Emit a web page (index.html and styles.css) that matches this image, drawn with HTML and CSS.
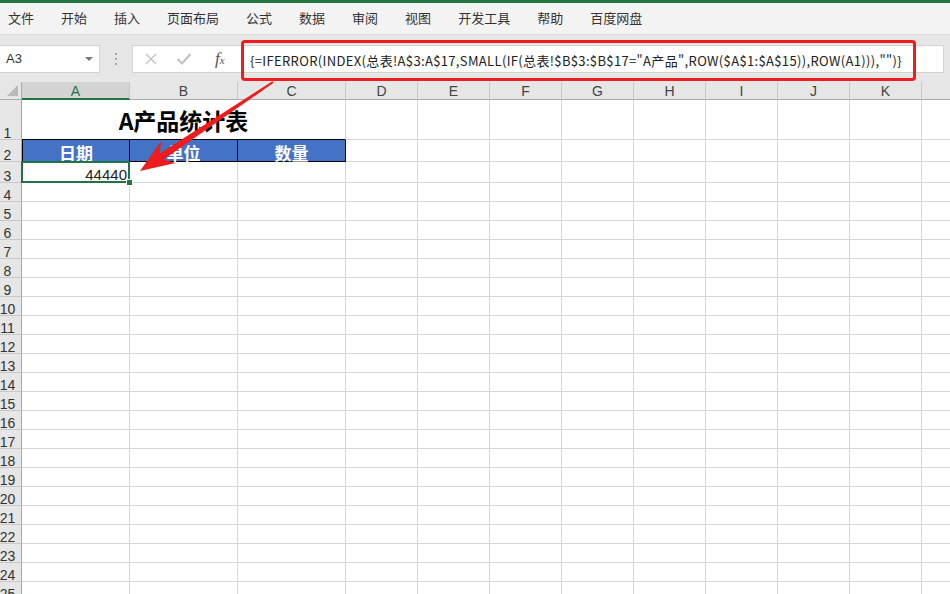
FILE: index.html
```html
<!DOCTYPE html>
<html lang="zh-CN">
<head>
  <meta charset="UTF-8">
  <title>A产品统计表 - Excel</title>
  <link rel="stylesheet" href="styles.css">
</head>
<body>
  <div class="topline"></div>
  <nav class="menu">
    <span>文件</span><span>开始</span><span>插入</span><span>页面布局</span><span>公式</span><span>数据</span><span>审阅</span><span>视图</span><span>开发工具</span><span>帮助</span><span>百度网盘</span>
  </nav>

  <div class="formula-row">
    <div class="namebox">
      <span>A3</span>
      <svg class="caret" width="8" height="5" viewBox="0 0 8 5"><polygon points="0,0 8,0 4,4" fill="#777"/></svg>
    </div>
    <div class="sep"><i></i><i></i><i></i></div>
    <div class="fbox">
      <div class="fbtns">
        <svg width="14" height="14" viewBox="0 0 14 14"><path d="M2 2 L12 12 M12 2 L2 12" stroke="#c2c2c2" stroke-width="1.4" fill="none"/></svg>
        <svg width="16" height="14" viewBox="0 0 16 14"><path d="M1.5 7 L6 11.5 L14.5 2" stroke="#c2c2c2" stroke-width="2" fill="none"/></svg>
        <span class="fx">f<sub>x</sub></span>
      </div>
      <div class="ftext">{=IFERROR(INDEX(总表!A$3:A$17,SMALL(IF(总表!$B$3:$B$17="A产品",ROW($A$1:$A$15)),ROW(A1))),"")}</div>
    </div>
  </div>

  <div class="sheet">
    <div class="corner"><svg width="22" height="18" viewBox="0 0 22 18"><polygon points="18,3 18,14 7,14" fill="#b9b9b9"/></svg></div>
    <div class="ch sel">A</div><div class="ch">B</div><div class="ch">C</div><div class="ch">D</div><div class="ch">E</div><div class="ch">F</div><div class="ch">G</div><div class="ch">H</div><div class="ch">I</div><div class="ch">J</div><div class="ch">K</div><div class="ch"></div>

    <div class="rh">1</div><div class="title">A产品统计表</div><div class="c"></div><div class="c"></div><div class="c"></div><div class="c"></div><div class="c"></div><div class="c"></div><div class="c"></div><div class="c"></div><div class="c"></div>

    <div class="rh">2</div><div class="hd first">日期</div><div class="hd">单位</div><div class="hd">数量</div><div class="c"></div><div class="c"></div><div class="c"></div><div class="c"></div><div class="c"></div><div class="c"></div><div class="c"></div><div class="c"></div><div class="c"></div>

    <div class="rh">3</div><div class="c num active">44440</div><div class="c"></div><div class="c"></div><div class="c"></div><div class="c"></div><div class="c"></div><div class="c"></div><div class="c"></div><div class="c"></div><div class="c"></div><div class="c"></div><div class="c"></div>

    <div class="rh">4</div><div class="c"></div><div class="c"></div><div class="c"></div><div class="c"></div><div class="c"></div><div class="c"></div><div class="c"></div><div class="c"></div><div class="c"></div><div class="c"></div><div class="c"></div><div class="c"></div>
    <div class="rh">5</div><div class="c"></div><div class="c"></div><div class="c"></div><div class="c"></div><div class="c"></div><div class="c"></div><div class="c"></div><div class="c"></div><div class="c"></div><div class="c"></div><div class="c"></div><div class="c"></div>
    <div class="rh">6</div><div class="c"></div><div class="c"></div><div class="c"></div><div class="c"></div><div class="c"></div><div class="c"></div><div class="c"></div><div class="c"></div><div class="c"></div><div class="c"></div><div class="c"></div><div class="c"></div>
    <div class="rh">7</div><div class="c"></div><div class="c"></div><div class="c"></div><div class="c"></div><div class="c"></div><div class="c"></div><div class="c"></div><div class="c"></div><div class="c"></div><div class="c"></div><div class="c"></div><div class="c"></div>
    <div class="rh">8</div><div class="c"></div><div class="c"></div><div class="c"></div><div class="c"></div><div class="c"></div><div class="c"></div><div class="c"></div><div class="c"></div><div class="c"></div><div class="c"></div><div class="c"></div><div class="c"></div>
    <div class="rh">9</div><div class="c"></div><div class="c"></div><div class="c"></div><div class="c"></div><div class="c"></div><div class="c"></div><div class="c"></div><div class="c"></div><div class="c"></div><div class="c"></div><div class="c"></div><div class="c"></div>
    <div class="rh">10</div><div class="c"></div><div class="c"></div><div class="c"></div><div class="c"></div><div class="c"></div><div class="c"></div><div class="c"></div><div class="c"></div><div class="c"></div><div class="c"></div><div class="c"></div><div class="c"></div>
    <div class="rh">11</div><div class="c"></div><div class="c"></div><div class="c"></div><div class="c"></div><div class="c"></div><div class="c"></div><div class="c"></div><div class="c"></div><div class="c"></div><div class="c"></div><div class="c"></div><div class="c"></div>
    <div class="rh">12</div><div class="c"></div><div class="c"></div><div class="c"></div><div class="c"></div><div class="c"></div><div class="c"></div><div class="c"></div><div class="c"></div><div class="c"></div><div class="c"></div><div class="c"></div><div class="c"></div>
    <div class="rh">13</div><div class="c"></div><div class="c"></div><div class="c"></div><div class="c"></div><div class="c"></div><div class="c"></div><div class="c"></div><div class="c"></div><div class="c"></div><div class="c"></div><div class="c"></div><div class="c"></div>
    <div class="rh">14</div><div class="c"></div><div class="c"></div><div class="c"></div><div class="c"></div><div class="c"></div><div class="c"></div><div class="c"></div><div class="c"></div><div class="c"></div><div class="c"></div><div class="c"></div><div class="c"></div>
    <div class="rh">15</div><div class="c"></div><div class="c"></div><div class="c"></div><div class="c"></div><div class="c"></div><div class="c"></div><div class="c"></div><div class="c"></div><div class="c"></div><div class="c"></div><div class="c"></div><div class="c"></div>
    <div class="rh">16</div><div class="c"></div><div class="c"></div><div class="c"></div><div class="c"></div><div class="c"></div><div class="c"></div><div class="c"></div><div class="c"></div><div class="c"></div><div class="c"></div><div class="c"></div><div class="c"></div>
    <div class="rh">17</div><div class="c"></div><div class="c"></div><div class="c"></div><div class="c"></div><div class="c"></div><div class="c"></div><div class="c"></div><div class="c"></div><div class="c"></div><div class="c"></div><div class="c"></div><div class="c"></div>
    <div class="rh">18</div><div class="c"></div><div class="c"></div><div class="c"></div><div class="c"></div><div class="c"></div><div class="c"></div><div class="c"></div><div class="c"></div><div class="c"></div><div class="c"></div><div class="c"></div><div class="c"></div>
    <div class="rh">19</div><div class="c"></div><div class="c"></div><div class="c"></div><div class="c"></div><div class="c"></div><div class="c"></div><div class="c"></div><div class="c"></div><div class="c"></div><div class="c"></div><div class="c"></div><div class="c"></div>
    <div class="rh">20</div><div class="c"></div><div class="c"></div><div class="c"></div><div class="c"></div><div class="c"></div><div class="c"></div><div class="c"></div><div class="c"></div><div class="c"></div><div class="c"></div><div class="c"></div><div class="c"></div>
    <div class="rh">21</div><div class="c"></div><div class="c"></div><div class="c"></div><div class="c"></div><div class="c"></div><div class="c"></div><div class="c"></div><div class="c"></div><div class="c"></div><div class="c"></div><div class="c"></div><div class="c"></div>
    <div class="rh">22</div><div class="c"></div><div class="c"></div><div class="c"></div><div class="c"></div><div class="c"></div><div class="c"></div><div class="c"></div><div class="c"></div><div class="c"></div><div class="c"></div><div class="c"></div><div class="c"></div>
    <div class="rh">23</div><div class="c"></div><div class="c"></div><div class="c"></div><div class="c"></div><div class="c"></div><div class="c"></div><div class="c"></div><div class="c"></div><div class="c"></div><div class="c"></div><div class="c"></div><div class="c"></div>
    <div class="rh">24</div><div class="c"></div><div class="c"></div><div class="c"></div><div class="c"></div><div class="c"></div><div class="c"></div><div class="c"></div><div class="c"></div><div class="c"></div><div class="c"></div><div class="c"></div><div class="c"></div>
    <div class="rh">25</div><div class="c"></div><div class="c"></div><div class="c"></div><div class="c"></div><div class="c"></div><div class="c"></div><div class="c"></div><div class="c"></div><div class="c"></div><div class="c"></div><div class="c"></div><div class="c"></div>
  </div>

  <!-- annotation arrow pointing at A3 -->
  <svg class="arrow" width="950" height="594" viewBox="0 0 950 594">
    <polygon points="272.4,81.2 159.7,153.6 161.1,141.3 140,171 175.5,162.9 163.5,159.4 273.6,82.8" fill="#ee1c1c"/>
  </svg>
</body>
</html>
```

FILE: styles.css
```css
body {
  margin: 0;
  width: 950px;
  height: 594px;
  overflow: hidden;
  position: relative;
  background: #fff;
  font-family: "Liberation Sans", "Noto Sans CJK SC", sans-serif;
  color: #222;
}

.topline {
  height: 3px;
  background: #217346;
}

.menu {
  height: 31px;
  box-sizing: border-box;
  display: flex;
  align-items: center;
  gap: 27px;
  padding: 0 0 3px 8px;
  background: #f3f3f3;
  font-family: "Noto Sans CJK SC", sans-serif;
  font-size: 13px;
  color: #333;
}

.formula-row {
  height: 48px;
  display: flex;
  align-items: center;
  background: #e6e6e6;
  border-top: 1px solid #dadada;
  box-sizing: border-box;
}

.namebox {
  width: 100px;
  height: 28px;
  box-sizing: border-box;
  background: #fff;
  border: 1px solid #d2d2d2;
  border-left: none;
  display: flex;
  align-items: center;
  justify-content: space-between;
  padding: 0 6px;
  font-size: 13px;
  color: #333;
}

.caret {
  margin-top: 1px;
}

.sep {
  width: 32px;
  display: flex;
  flex-direction: column;
  align-items: center;
  gap: 3px;
}

.sep i {
  width: 2px;
  height: 2px;
  background: #a6a6a6;
}

.fbox {
  flex: 1;
  height: 28px;
  margin-right: 6px;
  box-sizing: border-box;
  background: #fff;
  border: 1px solid #d2d2d2;
  display: flex;
  align-items: center;
}

.fbtns {
  width: 108px;
  display: flex;
  align-items: center;
  gap: 18px;
  padding-left: 11px;
  box-sizing: border-box;
}

.fx {
  font-family: "Liberation Serif", serif;
  font-style: italic;
  font-size: 17px;
  color: #555;
  margin-left: 5px;
}

.fx sub {
  font-size: 11px;
  vertical-align: 0;
}

.ftext {
  width: 675px;
  height: 41px;
  margin-top: 3px;
  box-sizing: border-box;
  border: 3px solid #ee1c1c;
  border-radius: 4px;
  display: flex;
  align-items: center;
  padding-left: 6px;
  font-family: "Noto Sans CJK SC", sans-serif;
  font-size: 13px;
  letter-spacing: 0.35px;
  color: #222;
  white-space: nowrap;
}

.sheet {
  display: grid;
  grid-template-columns: 22px 108px 108px 108px repeat(9, 72px);
  grid-template-rows: 18px 40px 22px 21px;
  grid-auto-rows: 19px;
}

.sheet > div {
  box-sizing: border-box;
}

.corner {
  background: #e6e6e6;
  border-right: 1px solid #a9a9a9;
  border-bottom: 1px solid #a9a9a9;
}

.corner svg {
  display: block;
}

.ch {
  background: #e6e6e6;
  border-right: 1px solid #c8c8c8;
  border-bottom: 1px solid #a9a9a9;
  text-align: center;
  font-size: 14px;
  line-height: 19px;
  color: #444;
}

.ch.sel {
  background: #d3d3d3;
  color: #217346;
  border-bottom: 2px solid #217346;
}

.rh {
  background: #e6e6e6;
  border-right: 1px solid #a9a9a9;
  border-bottom: 1px solid #c8c8c8;
  display: flex;
  align-items: flex-end;
  justify-content: center;
  padding-right: 6px;
  font-size: 14px;
  line-height: 12px;
  color: #333;
}

.c {
  border-right: 1px solid #d6d6d6;
  border-bottom: 1px solid #d6d6d6;
}

.title {
  grid-column: span 3;
  border-right: 1px solid #d6d6d6;
  border-bottom: 1px solid #000;
  display: flex;
  align-items: center;
  justify-content: center;
  padding-top: 1px;
  font-family: "Noto Sans CJK SC", sans-serif;
  font-size: 23px;
  font-weight: bold;
  color: #000;
}

.hd {
  background: #4472c4;
  border-right: 1px solid #000;
  border-bottom: 1px solid #000;
  display: flex;
  align-items: flex-end;
  justify-content: center;
  font-family: "Noto Sans CJK SC", sans-serif;
  font-size: 17px;
  font-weight: bold;
  line-height: 16px;
  color: #fff;
}

.hd.first {
  border-left: 1px solid #000;
}

.num {
  display: flex;
  align-items: flex-end;
  justify-content: flex-end;
  padding-right: 2px;
  font-size: 15px;
  line-height: 15px;
  color: #222;
}

.active {
  position: relative;
  z-index: 2;
}

.active::before {
  content: "";
  position: absolute;
  top: -1px;
  left: -1px;
  right: -1px;
  bottom: -1px;
  border: 2px solid #217346;
}

.active::after {
  content: "";
  position: absolute;
  right: -4px;
  bottom: -4px;
  width: 5px;
  height: 5px;
  background: #217346;
  border: 1px solid #fff;
}

.arrow {
  position: absolute;
  top: 0;
  left: 0;
  pointer-events: none;
}
```
